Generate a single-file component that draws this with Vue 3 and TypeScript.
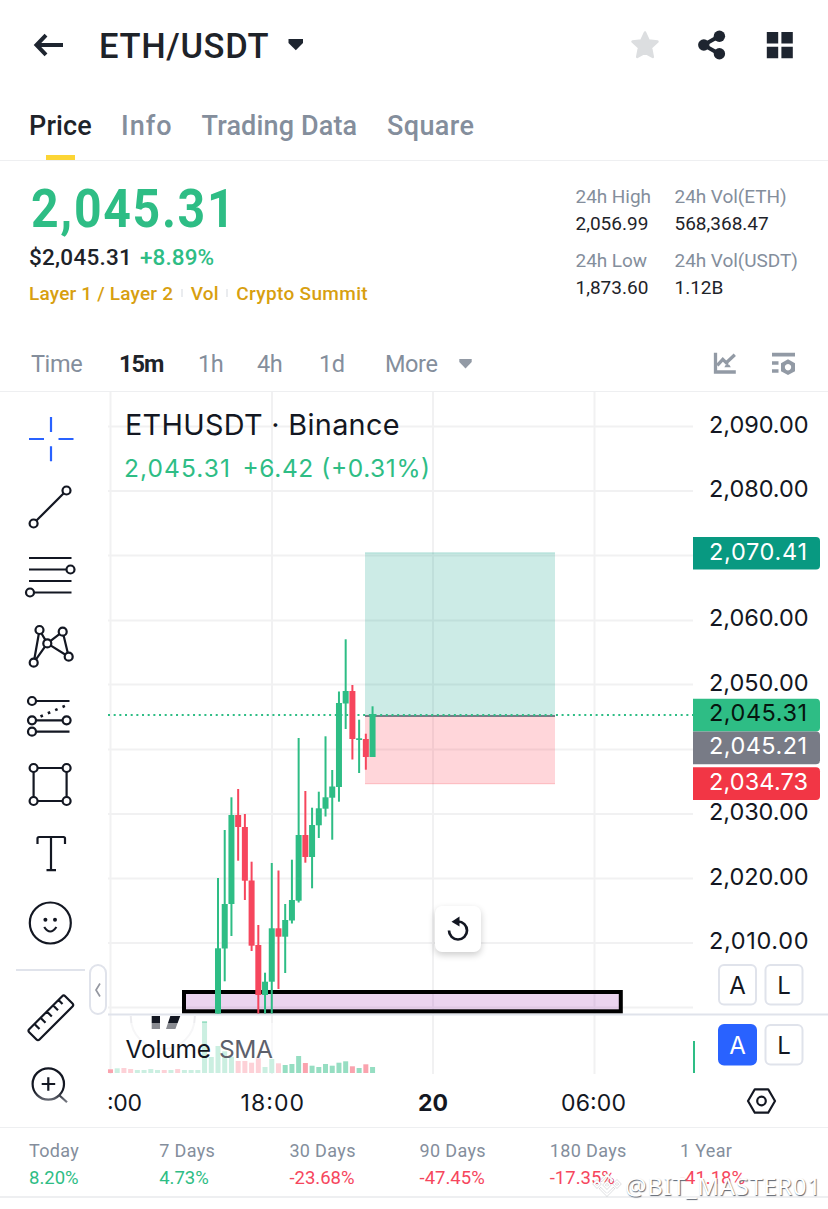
<script setup lang="ts">
interface Candle {
  up: boolean
  high: number
  top: number
  bottom: number
  low: number
}

const tabs = ['Price', 'Info', 'Trading Data', 'Square']
const intervals = ['Time', '15m', '1h', '4h', '1d', 'More']
const stats = [
  { label: '24h High', value: '2,056.99' },
  { label: '24h Vol(ETH)', value: '568,368.47' },
  { label: '24h Low', value: '1,873.60' },
  { label: '24h Vol(USDT)', value: '1.12B' },
]
const performance = [
  { label: 'Today', value: '8.20%' },
  { label: '7 Days', value: '4.73%' },
  { label: '30 Days', value: '-23.68%' },
  { label: '90 Days', value: '-47.45%' },
  { label: '180 Days', value: '-17.35%' },
  { label: '1 Year', value: '-41.18%' },
]

const gridX = [110.5, 272, 433, 594.5]
const gridY = [426.5, 491, 555.5, 620.5, 684.5, 749.5, 814, 878.5, 943, 1007.5]

const rows: [number, number, number, number, number][] = [
  [1, 878, 948.3, 1013.5, 1013.5],
  [1, 830, 904, 948.5, 981.3],
  [1, 797.3, 815, 904, 936],
  [0, 789, 815, 827, 860.7],
  [0, 814, 827, 880.7, 900],
  [0, 861.7, 880.5, 945.7, 951],
  [0, 925, 945, 995, 1013.5],
  [1, 972.7, 981.7, 995, 1013.5],
  [1, 863, 928.3, 981.7, 1013.5],
  [0, 870.5, 928.3, 936.7, 989],
  [1, 904, 920, 936.7, 973],
  [1, 859.7, 900, 920.5, 923.5],
  [1, 738, 835, 900.7, 902.5],
  [0, 791, 835, 857, 862.7],
  [1, 807.7, 825, 857, 888.3],
  [1, 791.7, 808.3, 825.3, 838],
  [1, 736.3, 797.3, 808.7, 816.5],
  [1, 770, 786.5, 797.7, 839.7],
  [1, 691.5, 703, 787, 801.7],
  [1, 639.3, 691, 703.5, 729],
  [0, 685, 691, 739, 759.5],
  [1, 719.7, 738.3, 740, 773],
  [0, 733.7, 739, 757, 769.7],
  [1, 706.3, 714, 757, 757],
]
const candles: Candle[] = rows.map(([up, high, top, bottom, low]) => ({ up: up === 1, high, top, bottom, low }))
const step = 6.72
const candleX = (i: number) => 218 + i * step

// Negative heights are falling bars.
const volumes = [
  -3.7, 4.7, -5, -4, 3, 3, 4, 3, -3, 3, -4, 3, 3, 3, 51.7, 16, 27, 21.7, 16.3, -12, -12, -10.3, -14.7, 6, 14,
  -9.7, 8, 9, 17, -10, 7.3, 6, 9, 7.3, 10.3, 11.7, -6.7, 5, -8.7, 6,
]

const axis = [
  { t: '2,090.00', y: 432.7 },
  { t: '2,080.00', y: 497 },
  { t: '2,060.00', y: 626.3 },
  { t: '2,050.00', y: 691 },
  { t: '2,030.00', y: 820 },
  { t: '2,020.00', y: 884.8 },
  { t: '2,010.00', y: 949 },
]
const tags = [
  { t: '2,070.41', y: 537, cls: 'target', w: 98 },
  { t: '2,045.31', y: 698.8, cls: 'last', w: 98 },
  { t: '2,045.21', y: 731.6, cls: 'entry', w: 98 },
  { t: '2,034.73', y: 767.3, cls: 'stop', w: 99 },
]
</script>

<template>
  <div class="page">
    <header class="header">
      <svg class="back" width="30" height="24" viewBox="0 0 30 24"><path d="M30 12H3.500M13 2.200L3.500 12l9.500 9.800" /></svg>
      <h1>ETH/USDT</h1>
      <svg class="caret" width="16" height="12" viewBox="0 0 16 12"><path d="M0.500 0h14.500v4L7.800 11.300 0.500 4z" /></svg>
      <div class="actions">
        <svg width="30" height="30" viewBox="0 0 30 30"><path class="star" d="M15 2.500l3.700 8.100 8.800 1-6.500 6 1.800 9.400-7.800-4.400L7.200 27 9 17.600l-6.500-6 8.800-1z" /></svg>
        <svg width="30" height="30" viewBox="1.500 0 30 30" class="share">
          <path d="M23 6L7 15l16 9" /><circle cx="7.300" cy="15" r="5.700" /><circle cx="22.900" cy="6.300" r="5.700" /><circle cx="22.900" cy="23.800" r="5.700" />
        </svg>
        <svg width="30" height="30" viewBox="0 0 30 30"><path class="tiles" d="M1.800 2h11.400v11.400H1.800zM16.400 2h11.400v11.400H16.400zM1.800 16.800h11.400v11.400H1.800zM16.400 16.800h11.400v11.400H16.400z" /></svg>
      </div>
    </header>

    <nav class="tabs">
      <span v-for="(tab, i) in tabs" :key="tab" class="tab" :class="{ active: i === 0 }">{{ tab }}</span>
    </nav>

    <section class="ticker">
      <div class="quote">
        <div class="price">2,045.31</div>
        <div class="fiat">$2,045.31 <span>+8.89%</span></div>
        <div class="tags"><span>Layer 1 / Layer 2</span><i /><span>Vol</span><i /><span>Crypto Summit</span></div>
      </div>
      <dl class="stats">
        <div v-for="s in stats" :key="s.label"><dt>{{ s.label }}</dt><dd>{{ s.value }}</dd></div>
      </dl>
    </section>

    <nav class="intervals">
      <span v-for="item in intervals" :key="item" :class="{ active: item === '15m' }">{{ item }}</span>
      <svg class="more" width="13" height="10" viewBox="0 0 13 10"><path d="M.3 0h12.400v3L6.500 9.500.3 3z" /></svg>
      <svg class="tool" width="26" height="26" viewBox="1.200 .7 26 26">
        <path class="line" d="M4.700 2.500v19.200H25M6.500 15l5.500-6 3.500 3.500L24 4.500" />
        <path d="M13.500 17h6.500l-1.500-2.500h-1v-2h-1.500v2h-1z" />
      </svg>
      <svg class="tool" width="26" height="26" viewBox="1 .7 26 26">
        <path d="M2 2.500h23v3.800H2zM2 11h6.500v3.500H2zM2 19h6.500v3.500H2z" />
        <path fill-rule="evenodd" d="M18 9l7 4v8l-7 3.800L11 21v-8zM18 13.700a3.200 3.200 0 1 0 .01 0z" />
      </svg>
    </nav>

    <main class="chart">
      <aside class="toolbar">
        <svg viewBox="-30 -30 60 60" class="cross"><path d="M-21 0h15M8.500 0h15M1-22V-7M1 7.300v15" /></svg>
        <svg viewBox="-30 -30 60 60"><path d="M-13.500 12.500L13.500-14.500" /><circle cx="16.500" cy="-17.500" r="4" /><circle cx="-16.400" cy="15.500" r="4" /></svg>
        <svg viewBox="-30 -30 60 60"><path d="M-21-19h42.500M-21-7.500h38M-21 4h42.500M-16 15.500h37.500" /><circle cx="20.500" cy="-7.500" r="4" /><circle cx="-20" cy="15.500" r="4" /></svg>
        <svg viewBox="-30 -30 60 60">
          <path d="M-10.500-17L-16.300 15.700-2.700-3.600zM-2.700-3.600L12.700-15.300 18.700 9.700z" />
          <circle cx="-10.500" cy="-17" r="4" /><circle cx="12.700" cy="-15.300" r="4" /><circle cx="-2.700" cy="-3.600" r="4" /><circle cx="-16.300" cy="15.700" r="4" /><circle cx="18.700" cy="9.700" r="4" />
        </svg>
        <svg viewBox="-30 -30 60 60">
          <path d="M-14-15h33.500M-14 4.300h27M-14 15.700h33.500" /><path class="dots" d="M-9.500.5L17-11" />
          <circle cx="-18" cy="-15" r="4" /><circle cx="-18" cy="4.300" r="4" /><circle cx="16.600" cy="4.300" r="4" /><circle cx="-18" cy="15.700" r="4" />
        </svg>
        <svg viewBox="-30 -30 60 60">
          <path d="M-16.400-17h33v33h-33z" /><circle cx="-16.400" cy="-17" r="4" /><circle cx="16.600" cy="-17" r="4" /><circle cx="-16.400" cy="16" r="4" /><circle cx="16.600" cy="16" r="4" />
        </svg>
        <svg viewBox="-30 -30 60 60"><path d="M-12.500-10v-5.500q0-1.500 1.500-1.500h24.500q1.500 0 1.500 1.500v5.500M1-17v33M-3.500 16.200h9.500" /></svg>
        <svg viewBox="-30 -30 60 60">
          <circle cx=".3" cy="0" r="20.500" /><circle class="eye" cx="-4.600" cy="-3.200" r="2" /><circle class="eye" cx="5" cy="-3.200" r="2" /><path d="M-5.800 4q6 9 12.200 0" />
        </svg>
        <hr />
        <svg viewBox="-30 -30 60 60" class="ruler">
          <path d="M11.200-21.800q1.500-1.500 3 0l7.300 7.300q1.500 1.500 0 3L-11.500 21.500q-1.500 1.500-3 0l-7.300-7.300q-1.500-1.500 0-3zM-16 6.500l4.500 4.500M-10 .3l4.500 4.500M-3.700-6l4.500 4.500M2.500-12.300L7-7.800M8-17.500l3.500 3.500" />
        </svg>
        <svg viewBox="-30 -30 60 60" class="magnifier">
          <defs><linearGradient id="fade" gradientUnits="userSpaceOnUse" x1="0" y1="5" x2="0" y2="16"><stop offset="0" stop-color="#131722" /><stop offset="1" stop-color="#777a83" /></linearGradient></defs>
          <circle cx="-2.700" cy="-2" r="15.700" stroke="url(#fade)" /><path stroke="url(#fade)" d="M8.500 9.500L16 16.300" /><path class="plus" d="M-9.300-2H4.200M-2.700-8.800V4.700" />
        </svg>
      </aside>

      <svg class="plot" width="740" height="735" viewBox="88 392 740 735">
        <defs><clipPath id="pane"><rect x="108" y="1016" width="600" height="60" /></clipPath></defs>
        <g class="grid">
          <path v-for="x in gridX" :key="x" :d="`M${x} 392V1074`" />
          <path v-for="y in gridY" :key="y" :d="`M108 ${y}H693`" />
        </g>

        <g clip-path="url(#pane)">
          <circle class="badge" cx="162.800" cy="1017" r="32" />
          <path class="mark" d="M151.700 1014h8.300v15h-8.300zM171 1014h10l-5.600 15h-9.400z" />
        </g>
        <rect
          v-for="(v, i) in volumes" :key="i" :class="v > 0 ? 'vol-up' : 'vol-down'"
          :x="candleX(i - 16) - 2.500" :y="1073 - Math.abs(v)" width="5" :height="Math.abs(v)"
        />
        <rect class="veil" x="113" y="1023" width="168" height="50" />

        <path class="separator" d="M108 1014.500H828" />
        <rect class="zone" x="184" y="992" width="436.800" height="19.300" />

        <rect class="profit" x="365" y="552.500" width="190" height="163.500" />
        <rect class="loss" x="365" y="716" width="190" height="68.300" />
        <path class="profit-edge" d="M365 553H555" /><path class="loss-edge" d="M365 783.500H555" />
        <path class="entry-line" d="M365 716H555" />
        <path class="last-line" d="M108 715H693" />

        <g v-for="(c, i) in candles" :key="'c' + i" :class="c.up ? 'up' : 'down'">
          <rect :x="candleX(i) - 1" :y="c.high" width="2" :height="c.low - c.high" />
          <rect :x="candleX(i) - 3" :y="c.top" width="6" :height="c.bottom - c.top" />
        </g>

        <text class="ink" x="125" y="434.500" font-size="28.800" textLength="274.500">ETHUSDT · Binance</text>
        <text class="gain" x="124" y="476.500" font-size="24.500" textLength="106">2,045.31</text>
        <text class="gain" x="242.500" y="476.500" font-size="24.500" textLength="187.500">+6.42 (+0.31%)</text>
        <text class="ink" x="125.500" y="1057.500" font-size="24.500" textLength="85.500">Volume</text>
        <text class="muted" x="219" y="1057.500" font-size="24.500" textLength="54">SMA</text>

        <text v-for="a in axis" :key="a.t" class="ink" x="709" :y="a.y" font-size="23.500" textLength="99.500">{{ a.t }}</text>
        <g v-for="tag in tags" :key="tag.t" :class="tag.cls">
          <path :d="`M693 ${tag.y}h123q4 0 4 4v24.600q0 4-4 4h-123z`" />
          <text x="709" :y="tag.y + 22.500" font-size="23.500" :textLength="tag.w">{{ tag.t }}</text>
        </g>
        <path class="vol-last" d="M694 1041V1073" />

        <g class="scale">
          <rect x="719" y="965" width="37" height="39.500" rx="5" /><rect x="765.500" y="965" width="37" height="39.500" rx="5" />
          <rect class="on" x="719" y="1025" width="37" height="39.500" rx="5" /><rect x="765.500" y="1025" width="37" height="39.500" rx="5" />
          <text x="737.500" y="994">A</text><text x="784" y="994">L</text>
          <text class="light" x="737.500" y="1053.500">A</text><text x="784" y="1053.500">L</text>
        </g>
        <g class="gear"><path d="M748 1101l6.800-11.700h13.400l6.800 11.700-6.800 11.700h-13.400z" /><circle cx="761.500" cy="1101" r="4.300" /></g>

        <g class="ink" font-size="23">
          <text x="107" y="1110.500" textLength="35">:00</text><text x="240.500" y="1110.500" textLength="63.500">18:00</text>
          <text class="bold" x="418" y="1110.500" textLength="30">20</text><text x="561" y="1110.500" textLength="65">06:00</text>
        </g>
      </svg>

      <button class="collapse" aria-label="Collapse"><svg width="6" height="16" viewBox="0 0 6 16"><path d="M5 1.500L1 8l4 6.500" /></svg></button>
      <button class="reset" aria-label="Reset">
        <svg width="24" height="28" viewBox="0 0 24 28"><path d="M3 14.500a9 9 0 1 0 9-9h-1" /><path class="head" d="M13.500.5v10L5.500 5.800z" /></svg>
      </button>
    </main>

    <footer class="performance">
      <div v-for="p in performance" :key="p.label">
        <div class="period">{{ p.label }}</div>
        <div class="change" :class="{ negative: p.value.startsWith('-') }">{{ p.value }}</div>
      </div>
    </footer>

    <div class="watermark">
      <svg width="30" height="26" viewBox="0 0 30 26"><path d="M9 8l6-6 6 6M2 11l3-3 3 3-3 3zM12 12l3-3 3 3-3 3zM22 11l3-3 3 3-3 3zM8 15l7 7 7-7" /></svg>
      <span>@BIT_MASTER01</span>
    </div>
  </div>
</template>

<style>
body { margin: 0; background: #fff; }
</style>

<style scoped>
.page { position: relative; width: 828px; height: 1209px; overflow: hidden; background: #fff; color: #1e2329; font-family: Roboto, "Liberation Sans", sans-serif; }
.header { display: flex; align-items: center; height: 90px; padding: 0 33px; box-sizing: border-box; }
.back { fill: none; stroke: #1e2530; stroke-width: 4; }
h1 { width: 172px; margin: 1px 0 0 36px; font-size: 34.500px; font-weight: 500; letter-spacing: .65px; line-height: 40px; }
.caret { margin-left: 17px; fill: #1e2530; }
.actions { display: flex; gap: 37.500px; margin-left: auto; }
.star { fill: #dcdee0; stroke: #dcdee0; stroke-width: 2.500; stroke-linejoin: round; }
.share { fill: #1e2530; }
.share path { fill: none; stroke: #1e2530; stroke-width: 3.800; }
.tiles { fill: #1e2530; }
.tabs { display: grid; grid-template-columns: 62px 50.500px 155.500px 90px; column-gap: 30px; height: 70px; padding-left: 29px; border-bottom: 1px solid #eeeff1; }
.tab { position: relative; padding-top: 20px; color: #848e9c; font-size: 27px; font-weight: 500; line-height: 32px; letter-spacing: .15px; white-space: nowrap; }
.tab:nth-child(2) { letter-spacing: 1px; }
.tab:nth-child(4) { letter-spacing: .4px; }
.active { color: #1e2329; }
.tab.active::after { content: ''; position: absolute; left: 17px; bottom: 0; width: 29px; height: 5px; background: #fcd535; }
.ticker { display: flex; height: 175px; padding-left: 29px; }
.quote { width: 546.500px; padding-top: 17px; white-space: nowrap; }
.price { margin-left: 1.500px; color: #2ebd85; font-size: 53.500px; font-weight: 700; letter-spacing: 1.900px; line-height: 62px; transform: scaleX(.9); transform-origin: left; }
.fiat { height: 27px; margin-top: 4px; font-size: 22.500px; font-weight: 500; letter-spacing: .25px; line-height: 27px; }
.fiat span { margin-left: 2px; color: #2ebd85; letter-spacing: .1px; }
.tags { display: flex; align-items: center; height: 24px; margin-top: 10px; color: #d89f10; font-size: 19px; font-weight: 500; letter-spacing: .2px; }
.tags span:last-child { letter-spacing: .35px; }
.tags i { width: 2px; height: 8px; margin: 0 8px 0 7.500px; background: #eaecef; }
.stats { display: grid; grid-template-columns: 99px 150px; grid-auto-rows: 63.500px; margin: 23.400px 0 0; white-space: nowrap; }
dt { color: #848e9c; font-size: 19px; line-height: 26px; letter-spacing: -.05px; }
dd { margin: 0; font-size: 19px; line-height: 28px; }
.intervals { position: relative; display: grid; grid-template-columns: 88px 79px 59px 62px 66px 74px 253px 59px 40px; align-items: center; height: 55px; padding-left: 31px; border-bottom: 1px solid #eeeff1; color: #848e9c; font-size: 23.500px; letter-spacing: -.4px; }
.intervals .active { color: #1e2329; font-weight: 700; font-size: 23.500px; letter-spacing: -1px; }
.more, .tool { fill: #929aa5; }
.line { fill: none; stroke: #929aa5; stroke-width: 3.300; }
.chart { position: relative; display: flex; height: 735px; }
.toolbar { display: flex; flex-direction: column; align-items: center; width: 88px; height: 722px; padding-top: 12.400px; padding-right: 0; }
.toolbar svg { flex: none; width: 60px; height: 60px; margin: 4.600px 0 4.600px 12px; fill: none; stroke: #131722; stroke-width: 2.200; stroke-linejoin: round; }
.toolbar .cross { stroke: #2962ff; }
.toolbar circle { fill: #fff; }
.toolbar .eye { fill: #131722; stroke: none; }
.toolbar .dots { stroke-dasharray: 2.600 5.400; stroke-width: 2.600; }
.toolbar hr { flex: none; width: 69px; height: 2px; margin: 11.500px 0 0 13px; border: 0; background: #e0e3eb; }
.toolbar .ruler { margin-top: 16.500px; margin-left: 13px; }
.toolbar .magnifier { margin-top: 4px; margin-left: 13px; }
.toolbar .magnifier circle { fill: none; }
.plot { flex: none; font-family: Inter, "Liberation Sans", sans-serif; }
.grid { stroke: #f1f1f2; stroke-width: 2; }
.ink { fill: #131722; }
.gain { fill: #2ebd85; }
.muted { fill: #5d606b; }
.bold { font-weight: 700; }
.badge { fill: #fff; stroke: #ececef; stroke-width: 2; }
.mark { fill: #131722; }
.vol-up { fill: #96dec2; }
.vol-down { fill: #faa3ae; }
.veil { fill: #fff; fill-opacity: .5; }
.separator { stroke: #e0e3eb; stroke-width: 2; }
.zone { fill: rgba(156, 39, 176, .2); stroke: #000; stroke-width: 4; }
.last-line { stroke: #2ebd85; stroke-width: 2; stroke-dasharray: 2 3.670; }
.up { fill: #2ebd85; }
.down { fill: #f6465d; }
.profit { fill: rgba(0, 153, 129, .2); }
.loss { fill: rgba(255, 50, 70, .2); }
.profit-edge { stroke: #089981; stroke-opacity: .2; }
.loss-edge { stroke: #f23645; stroke-opacity: .15; }
.entry-line { stroke: #787b86; stroke-width: 2; }
.target { fill: #089981; }
.last { fill: #2ebd85; }
.entry { fill: #787b86; }
.stop { fill: #f23645; }
.target text, .entry text, .stop text { fill: #fff; }
.last text { fill: #06150f; }
.vol-last { stroke: #2ebd85; stroke-width: 2; }
.scale rect { fill: #fff; stroke: #e0e3eb; stroke-width: 2; }
.scale .on { fill: #2962ff; stroke: #2962ff; }
.scale text { fill: #131722; font-size: 24px; text-anchor: middle; }
.scale .light { fill: #fff; }
.gear { fill: none; stroke: #131722; stroke-width: 2.200; stroke-linejoin: round; }
.collapse { position: absolute; left: 88.500px; top: 572px; display: flex; align-items: center; justify-content: center; width: 18px; height: 51px; padding: 0; border: 2px solid #e0e3eb; border-radius: 9px; background: #fff; }
.collapse svg { fill: none; stroke: #9598a1; stroke-width: 1.700; }
.reset { position: absolute; left: 435px; top: 514px; display: flex; align-items: center; justify-content: center; width: 46px; height: 46px; padding: 2px 0 0; border: 0; border-radius: 7px; background: #fff; box-shadow: 0 3px 7px rgba(0, 0, 0, .2); }
.reset svg { fill: none; stroke: #131722; stroke-width: 2.700; }
.reset .head { fill: #131722; stroke: none; }
.performance { display: grid; grid-template-columns: repeat(6, 130.200px); height: 69px; padding-left: 29px; border-top: 1px solid #eeeff1; border-bottom: 2px solid #eeeff1; box-sizing: border-box; height: 71px; }
.period { padding-top: 10px; color: #848e9c; font-size: 18px; line-height: 25px; letter-spacing: .35px; }
.change { color: #2ebd85; font-size: 18.500px; line-height: 30px; }
.negative { color: #f6465d; }
.watermark { position: absolute; left: 592px; top: 1172px; display: flex; align-items: center; gap: 3px; color: #fff; font-family: "Noto Sans", sans-serif; font-size: 24px; line-height: 28px; letter-spacing: .6px; text-shadow: .8px .8px 1px #5d6470; white-space: nowrap; }
.watermark svg { fill: none; stroke: #fff; stroke-width: 2; filter: drop-shadow(.8px .8px .5px #5d6470); }
</style>
